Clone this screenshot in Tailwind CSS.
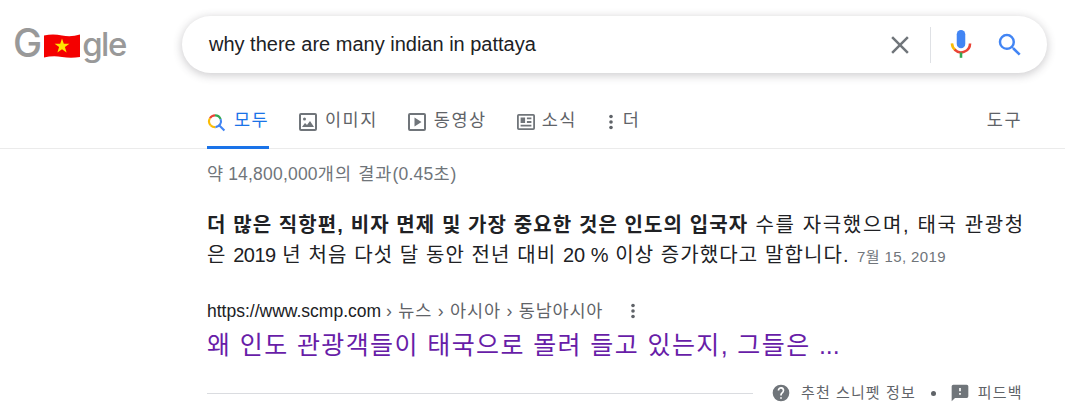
<!DOCTYPE html>
<html lang="ko">
<head>
  <meta charset="UTF-8">
  <title>why there are many indian in pattaya</title>
  <script src="https://cdn.jsdelivr.net/npm/@tailwindcss/browser@4"></script>
</head>
<body class="w-[1065px] h-[417px] overflow-hidden bg-white font-['Liberation_Sans','Noto_Sans_CJK_KR',sans-serif] text-[#202124]">
  <!-- Header -->
  <div class="flex items-start h-[97px] pt-[16px]">
    <div class="w-[182px] h-[57px] pl-[13px] flex items-center text-[#999999] font-['Inter',sans-serif] font-medium">
      <span class="text-[39px] leading-[44px] -mt-[3px]">G</span>
      <svg class="w-[36px] h-[24px] ml-[2px] mt-[2px] shrink-0" viewBox="0 0 36 24">
        <path d="M0 1.5 Q9 -0.5 18 1.5 T36 0.5 V23 Q27 24.5 18 23 T0 23.5 Z" fill="#f40000"/>
        <path d="M18 4.5 L19.8 9.8 L25.4 9.8 L20.9 13.1 L22.6 18.5 L18 15.2 L13.4 18.5 L15.1 13.1 L10.6 9.8 L16.2 9.8 Z" fill="#ffe600"/>
      </svg>
      <span class="text-[33px] leading-[44px] tracking-[-1.5px] ml-[2px] -mt-[1px]">gle</span>
    </div>
    <div class="w-[865px] h-[57px] rounded-full bg-white shadow-[0_2px_8px_1px_rgba(64,60,67,0.24)] flex items-center pl-[27px] pr-[22px]">
      <span class="flex-1 text-[20px] leading-[24px] -mt-[2px]">why there are many indian in pattaya</span>
      <svg class="w-[30px] h-[30px] text-[#70757a]" viewBox="0 0 24 24" fill="currentColor"><path d="M19 6.41 17.59 5 12 10.59 6.41 5 5 6.41 10.59 12 5 17.59 6.41 19 12 13.41 17.59 19 19 17.59 13.41 12z"/></svg>
      <div class="w-px h-[36px] bg-[#dfe1e5] ml-[15px] mr-[17px]"></div>
      <svg class="w-[26px] h-[32px] mr-[21px]" viewBox="0 0 24 30">
        <rect x="8" y="1" width="8" height="17" rx="4" fill="#4285f4"/>
        <path d="M3.5 13.5 A8.5 8.5 0 0 0 7 20" fill="none" stroke="#fbbc05" stroke-width="2.4"/>
        <path d="M6 19.4 A8.5 8.5 0 0 0 20.5 13.5" fill="none" stroke="#ea4335" stroke-width="2.4"/>
        <rect x="10.8" y="22" width="2.4" height="5" fill="#34a853"/>
      </svg>
      <svg class="w-[30px] h-[30px] text-[#4285f4]" viewBox="0 0 24 24" fill="currentColor"><path d="M15.5 14h-.79l-.28-.27A6.47 6.47 0 0 0 16 9.5 6.5 6.5 0 1 0 9.5 16c1.61 0 3.09-.59 4.23-1.57l.27.28v.79l5 4.99L20.49 19l-4.99-5zm-6 0C7.01 14 5 11.99 5 9.5S7.01 5 9.5 5 14 7.01 14 9.5 11.99 14 9.5 14z"/></svg>
    </div>
  </div>

  <!-- Tabs -->
  <div class="h-[52px] border-b border-[#ebebeb] pl-[207px] pr-[43px] flex text-[#5f6368] text-[17.5px] tracking-[1.5px]">
    <div class="h-[52px] w-[62px] border-b-[3px] border-[#1a73e8] flex items-start pt-[12px] text-[#1a73e8]">
      <svg class="w-[19px] h-[19px] mt-[4px] mr-[8px] shrink-0" viewBox="0 0 18 18" fill="none" stroke-width="2">
        <path d="M7.6 2.2a5.6 5.6 0 0 1 5.3 3.6" stroke="#34a853"/>
        <path d="M2.8 5A5.6 5.6 0 0 1 7.6 2.2" stroke="#ea4335"/>
        <path d="M3.6 11.8A5.6 5.6 0 0 1 2.8 5" stroke="#fbbc05"/>
        <path d="M8 13.4A5.6 5.6 0 0 1 3.6 11.8" stroke="#fbbc05"/>
        <path d="M12.9 5.8A5.6 5.6 0 0 1 8 13.4" stroke="#4285f4"/>
        <path d="M11.5 11.5 16.5 16.5" stroke="#4285f4"/>
      </svg>
      <span class="leading-[22px] whitespace-nowrap">모두</span>
    </div>
    <div class="flex items-start pt-[12px] ml-[30px]">
      <svg class="w-[18px] h-[18px] mt-[4px] mr-[8px]" viewBox="3 3 18 18" fill="#70757a"><path d="M19 3H5a2 2 0 0 0-2 2v14a2 2 0 0 0 2 2h14a2 2 0 0 0 2-2V5a2 2 0 0 0-2-2zm0 16H5V5h14v14zM8.5 10.5A1.5 1.5 0 1 0 8.5 7.5a1.5 1.5 0 0 0 0 3zM14 11l-3 4-2-2-3 4h12z"/></svg>
      <span class="leading-[22px]">이미지</span>
    </div>
    <div class="flex items-start pt-[12px] ml-[30px]">
      <svg class="w-[18px] h-[18px] mt-[4px] mr-[8px]" viewBox="3 3 18 18" fill="#70757a"><path d="M19 3H5a2 2 0 0 0-2 2v14a2 2 0 0 0 2 2h14a2 2 0 0 0 2-2V5a2 2 0 0 0-2-2zm0 16H5V5h14v14zM9.5 7.5v9l7-4.5z"/></svg>
      <span class="leading-[22px]">동영상</span>
    </div>
    <div class="flex items-start pt-[12px] ml-[30px]">
      <svg class="w-[18px] h-[18px] mt-[4px] mr-[7px]" viewBox="2 3 20 18" fill="#70757a"><path d="M20 3H4a2 2 0 0 0-2 2v14a2 2 0 0 0 2 2h16a2 2 0 0 0 2-2V5a2 2 0 0 0-2-2zm0 16H4V5h16v14zM6 7h5v6H6zM13 7h5v2h-5zM13 11h5v2h-5zM6 15h12v2H6z"/></svg>
      <span class="leading-[22px]">소식</span>
    </div>
    <div class="flex items-start pt-[12px] ml-[26px]">
      <svg class="w-[16px] h-[18px] mt-[4px] mr-[4px]" viewBox="0 0 16 18" fill="#5f6368"><circle cx="8" cy="3.5" r="1.8"/><circle cx="8" cy="9" r="1.8"/><circle cx="8" cy="14.5" r="1.8"/></svg>
      <span class="leading-[22px]">더</span>
    </div>
    <div class="ml-auto pt-[12px] leading-[22px]">도구</div>
  </div>

  <!-- Results -->
  <div class="pl-[207px] pr-[43px]">
    <div class="pt-[14px] text-[17.5px] leading-[22px] tracking-[1.1px] text-[#70757a] whitespace-nowrap"><span class="tracking-[0.1px]">약 </span><span class="tracking-[0.2px]">14,800,000</span>개의 결과<span class="tracking-[0.2px]">(0.45</span>초)</div>
    <div class="pt-[25px] text-[20px] leading-[30px] w-[825px] tracking-[1.65px]">
      <b class="font-bold tracking-[1.1px]">더 많은 직항편, 비자 면제 및 가장 중요한 것은 인도의 입국자</b> 수를 자극했으며, 태국 관광청<span class="tracking-[1.1px]">은 <span class="tracking-[-0.5px]">2019</span> 년 처음 다섯 달 동안 전년 대비 <span class="tracking-normal">20 %</span> 이상 증가했다고 말합니다.</span>
      <span class="text-[15px] text-[#70757a] tracking-[0.4px]">7월 15, 2019</span>
    </div>
    <div class="pt-[27px] flex items-center text-[17.5px] leading-[24px]">
      <span class="text-[#202124]">https://www.scmp.com</span>
      <span class="text-[#5f6368] ml-[5px] tracking-[0.8px]">› 뉴스 › 아시아 › 동남아시아</span>
      <svg class="w-[16px] h-[18px] ml-[22px]" viewBox="0 0 16 18" fill="#5f6368"><circle cx="8" cy="3.5" r="1.8"/><circle cx="8" cy="9" r="1.8"/><circle cx="8" cy="14.5" r="1.8"/></svg>
    </div>
    <div class="pt-[6px] text-[25px] leading-[32px] tracking-[1.4px] text-[#681da8] whitespace-nowrap">왜 인도 관광객들이 태국으로 몰려 들고 있는지, 그들은 <span class="tracking-normal">...</span></div>
    <div class="pt-[16px] flex items-center h-[48px] text-[15px] tracking-[1.1px] text-[#5f6368] whitespace-nowrap">
      <div class="w-[546px] h-px bg-[#dadce0] shrink-0"></div>
      <svg class="w-[20px] h-[20px] ml-[18px] shrink-0" viewBox="0 0 24 24" fill="#70757a"><path d="M12 2a10 10 0 1 0 0 20 10 10 0 0 0 0-20zm1 17h-2v-2h2v2zm2.07-7.75-.9.92C13.45 12.9 13 13.5 13 15h-2v-.5c0-1.1.45-2.1 1.17-2.83l1.24-1.26A2 2 0 1 0 10 9H8a4 4 0 1 1 7.07 2.25z"/></svg>
      <span class="ml-[10px]">추천 스니펫 정보</span>
      <span class="w-[5px] h-[5px] rounded-full bg-[#5f6368] ml-[15px] shrink-0"></span>
      <svg class="w-[20px] h-[20px] ml-[14px] shrink-0" viewBox="0 0 24 24" fill="#70757a"><path d="M20 2H4a2 2 0 0 0-2 2v18l4-4h14a2 2 0 0 0 2-2V4a2 2 0 0 0-2-2zm-7 12h-2v-2h2v2zm0-4h-2V6h2v4z"/></svg>
      <span class="ml-[8px]">피드백</span>
    </div>
  </div>
</body>
</html>
